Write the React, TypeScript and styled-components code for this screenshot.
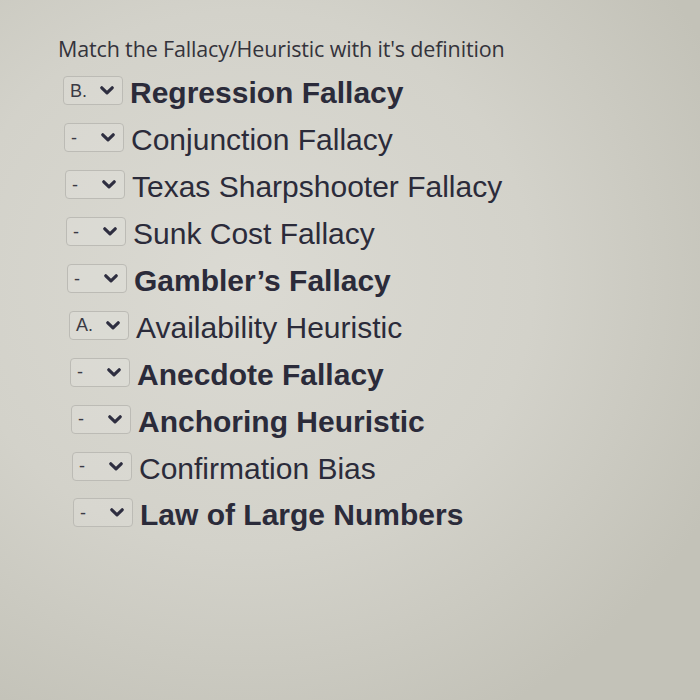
import React from "react";
import styled, { createGlobalStyle } from "styled-components";

const Global = createGlobalStyle`
  html, body {
    margin: 0;
    padding: 0;
    width: 700px;
    height: 700px;
    overflow: hidden;
  }
  body {
    background:
      radial-gradient(ellipse 75% 70% at 35% 40%, #dbdad3 0%, #d3d2ca 55%, #c3c2b8 100%);
  }
`;

const Page = styled.main`
  width: 700px;
  height: 700px;
  box-sizing: border-box;
  padding: 35px 0 0 58px;
  display: flex;
  flex-direction: column;
`;

const Prompt = styled.h1`
  margin: 0 0 7px 0;
  font-family: "Open Sans", "Lato", sans-serif;
  font-weight: 400;
  font-size: 21.5px;
  line-height: 28px;
  color: #34333b;
  letter-spacing: -0.15px;
`;

const List = styled.ol`
  list-style: none;
  margin: 0;
  padding: 0;
  display: flex;
  flex-direction: column;
`;

const Row = styled.li<{ $shift: number }>`
  height: 46.9px;
  display: flex;
  align-items: center;
  gap: 7px;
  padding-left: ${(p) => 5 + p.$shift}px;
`;

const Picker = styled.div`
  width: 60px;
  height: 29px;
  margin-top: -5px;
  box-sizing: border-box;
  border: 1.5px solid #bcbbb5;
  border-radius: 4px;
  background: rgba(255, 255, 255, 0.12);
  display: flex;
  align-items: center;
  justify-content: space-between;
  padding: 0 8px 0 6px;
  font-family: "Liberation Sans", Arial, sans-serif;
  font-size: 18px;
  color: #3a3a44;
`;

const Choice = styled.span`
  line-height: 1;
`;

const Term = styled.span<{ $bold?: boolean }>`
  font-family: "Liberation Sans", Arial, sans-serif;
  font-size: 30px;
  font-weight: ${(p) => (p.$bold ? 700 : 400)};
  color: #2b2b3a;
  line-height: 1;
  white-space: nowrap;
`;

const Chevron = () => (
  <svg width="14" height="9" viewBox="0 0 14 9" aria-hidden="true">
    <path d="M1.8 1.8 L7 6.8 L12.2 1.8" fill="none" stroke="#2e2e40" strokeWidth="3.2" strokeLinecap="round" strokeLinejoin="round" />
  </svg>
);

const items: { choice: string; term: string; bold?: boolean }[] = [
  { choice: "B.", term: "Regression Fallacy", bold: true },
  { choice: "-", term: "Conjunction Fallacy" },
  { choice: "-", term: "Texas Sharpshooter Fallacy" },
  { choice: "-", term: "Sunk Cost Fallacy" },
  { choice: "-", term: "Gambler\u2019s Fallacy", bold: true },
  { choice: "A.", term: "Availability Heuristic" },
  { choice: "-", term: "Anecdote Fallacy", bold: true },
  { choice: "-", term: "Anchoring Heuristic", bold: true },
  { choice: "-", term: "Confirmation Bias" },
  { choice: "-", term: "Law of Large Numbers", bold: true },
];

export default function App() {
  return (
    <>
      <Global />
      <Page>
        <Prompt>Match the Fallacy/Heuristic with it's definition</Prompt>
        <List>
          {items.map((it, i) => (
            <Row key={it.term} $shift={Math.round(i * 1.1)}>
              <Picker>
                <Choice>{it.choice}</Choice>
                <Chevron />
              </Picker>
              <Term $bold={it.bold}>{it.term}</Term>
            </Row>
          ))}
        </List>
      </Page>
    </>
  );
}
